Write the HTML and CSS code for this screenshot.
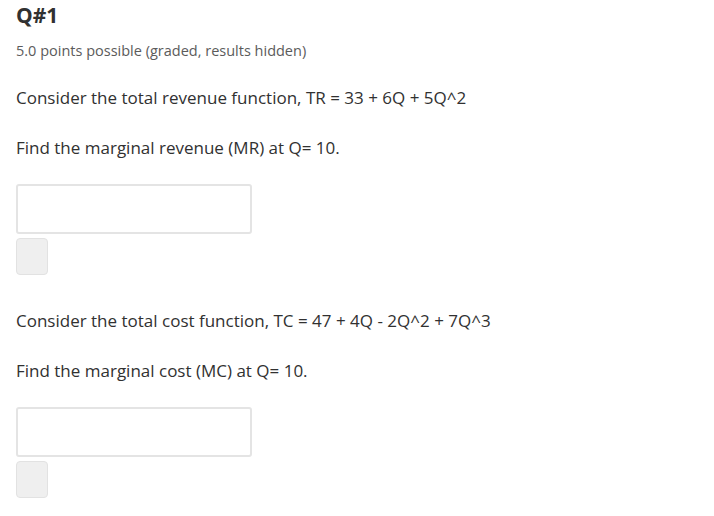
FILE: index.html
```html
<!DOCTYPE html>
<html>
<head>
<meta charset="utf-8">
<link rel="stylesheet" href="styles.css">
</head>
<body>
<div class="problem">
  <h2 class="title">Q#1</h2>
  <div class="meta">5.0 points possible (graded, results hidden)</div>
  <div class="part part-first">
    <p class="text">Consider the total revenue function, TR = 33 + 6Q + 5Q^2</p>
    <p class="text text-second">Find the marginal revenue (MR) at Q= 10.</p>
    <div class="answer">
      <input class="field" type="text">
      <button class="status" type="button"></button>
    </div>
  </div>
  <div class="part part-next">
    <p class="text">Consider the total cost function, TC = 47 + 4Q - 2Q^2 + 7Q^3</p>
    <p class="text text-second">Find the marginal cost (MC) at Q= 10.</p>
    <div class="answer">
      <input class="field" type="text">
      <button class="status" type="button"></button>
    </div>
  </div>
</div>
</body>
</html>
```
FILE: styles.css
```css
html, body {
  margin: 0;
  padding: 0;
  background: #ffffff;
}
body {
  font-family: "Open Sans", "Noto Sans", sans-serif;
  color: #313131;
}
.problem {
  padding: 0 16px;
  display: flex;
  flex-direction: column;
}
.title {
  margin: 0;
  font-size: 21px;
  line-height: 30px;
  font-weight: 700;
  color: #313131;
}
.meta {
  margin-top: 11px;
  font-size: 14.5px;
  line-height: 20px;
  color: #5b5b5b;
}
.part {
  display: flex;
  flex-direction: column;
}
.part-first {
  margin-top: 25px;
}
.part-next {
  margin-top: 34px;
}
.text {
  margin: 0;
  font-size: 17px;
  line-height: 24px;
}
.text-second {
  margin-top: 26px;
}
.answer {
  margin-top: 24px;
  display: flex;
  flex-direction: column;
  gap: 4px;
}
.field {
  box-sizing: border-box;
  width: 236px;
  height: 50px;
  margin: 0;
  border: 2px solid #e4e4e4;
  border-radius: 3px;
  background: #fff;
  outline: none;
}
.status {
  box-sizing: border-box;
  width: 32px;
  height: 37px;
  margin: 0;
  padding: 0;
  border: 1px solid #e2e2e2;
  border-radius: 4px;
  background: #efefef;
}
```
